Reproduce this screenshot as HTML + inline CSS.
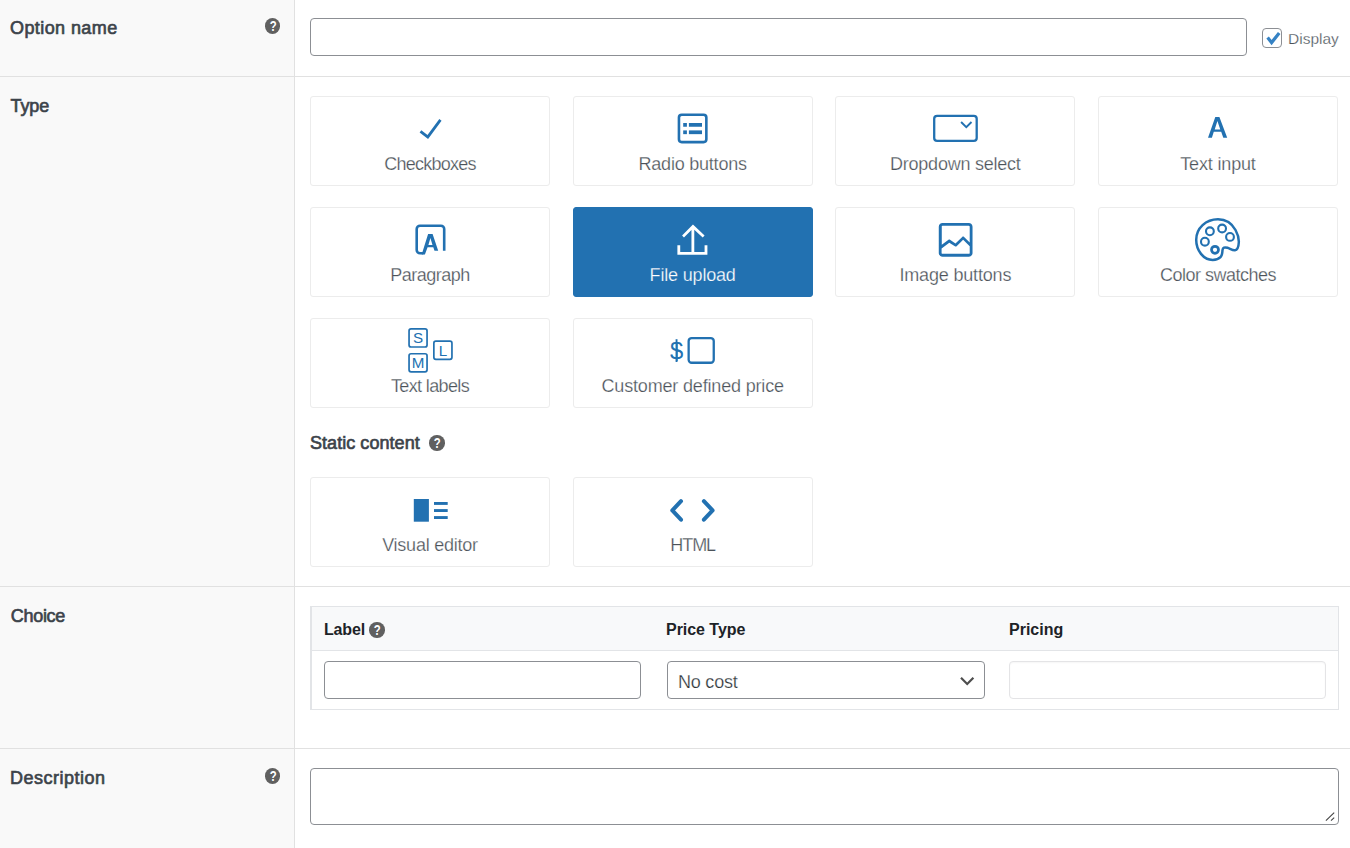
<!DOCTYPE html>
<html>
<head>
<meta charset="utf-8">
<title>Add-on option</title>
<style>
*{box-sizing:border-box;margin:0;padding:0}
html,body{width:1350px;height:848px;overflow:hidden;background:#fff}
body{font-family:"Liberation Sans",sans-serif;color:#50575e;position:relative}
.abs{position:absolute}
.leftcol{left:0;top:0;width:295px;height:848px;background:#f9f9f9;border-right:1px solid #e1e1e1}
.hline{left:0;width:1350px;height:1px;background:#e1e1e1}
.lbl{font-weight:normal;-webkit-text-stroke:0.65px #3c434a;font-size:18px;line-height:20px;color:#3c434a;white-space:nowrap;left:10px}
.tip{width:15.5px;height:15.5px;border-radius:50%;background:#606060;color:#fff;font-weight:bold;font-size:13.5px;line-height:15.5px;text-align:center}
.tip i{font-style:normal;display:block;transform:translate(0.4px,0.45px) scale(0.84,1.1)}
.inp{background:#fff;border:1px solid #8c8f94;border-radius:4px}
.tile{width:240px;height:90px;background:#fff;border:1px solid #ececec;border-radius:3px}
.tile .t{position:absolute;left:0;width:100%;top:57px;text-align:center;font-size:18px;line-height:20px;color:#4b5259;white-space:nowrap;-webkit-text-stroke:0.25px #fff}
.tile.sel{background:#2271b1;border-color:#2271b1}
.tile.sel .t{color:#fff;-webkit-text-stroke:0.25px #2271b1}
.th{font-weight:bold;font-size:16px;line-height:20px;color:#1d2327;white-space:nowrap}
#icons{left:0;top:0;width:1350px;height:848px;pointer-events:none}
</style>
</head>
<body>
<div class="abs leftcol"></div>
<div class="abs hline" style="top:76px"></div>
<div class="abs hline" style="top:586px"></div>
<div class="abs hline" style="top:748px"></div>

<div class="abs lbl" style="top:18px;letter-spacing:0.41px">Option name</div>
<div class="abs lbl" style="top:96px;left:10.5px;letter-spacing:-0.1px">Type</div>
<div class="abs lbl" style="top:606px;left:10.8px;letter-spacing:-0.3px">Choice</div>
<div class="abs lbl" style="top:768px;letter-spacing:0.49px">Description</div>

<div class="abs tip" style="left:264.7px;top:18.1px"><i>?</i></div>
<div class="abs tip" style="left:264.7px;top:768.1px"><i>?</i></div>

<!-- option name input -->
<div class="abs inp" style="left:310px;top:18px;width:937px;height:38px"></div>
<div class="abs" id="cb" style="left:1262px;top:28px;width:20px;height:20px;border:1px solid #8c8f94;border-radius:4px;background:#fff"></div>
<div class="abs" id="disp" style="left:1288px;top:29px;font-size:15.5px;line-height:20px;color:#4b5259;letter-spacing:0px;-webkit-text-stroke:0.25px #fff">Display</div>

<!-- tiles row 1 -->
<div class="abs tile" style="left:310px;top:96px"><div class="t" style="letter-spacing:-0.77px">Checkboxes</div></div>
<div class="abs tile" style="left:572.67px;top:96px"><div class="t" style="letter-spacing:-0.22px">Radio buttons</div></div>
<div class="abs tile" style="left:835.33px;top:96px"><div class="t" style="letter-spacing:-0.23px">Dropdown select</div></div>
<div class="abs tile" style="left:1098px;top:96px"><div class="t" style="letter-spacing:-0.16px">Text input</div></div>
<!-- row 2 -->
<div class="abs tile" style="left:310px;top:207px"><div class="t" style="letter-spacing:-0.53px">Paragraph</div></div>
<div class="abs tile sel" style="left:572.67px;top:207px"><div class="t" style="letter-spacing:-0.18px">File upload</div></div>
<div class="abs tile" style="left:835.33px;top:207px"><div class="t" style="letter-spacing:-0.17px">Image buttons</div></div>
<div class="abs tile" style="left:1098px;top:207px"><div class="t" style="letter-spacing:-0.49px">Color swatches</div></div>
<!-- row 3 -->
<div class="abs tile" style="left:310px;top:318px"><div class="t" style="letter-spacing:-0.63px">Text labels</div></div>
<div class="abs tile" style="left:572.67px;top:318px"><div class="t" style="letter-spacing:-0.17px">Customer defined price</div></div>

<div class="abs lbl" id="static" style="left:310px;top:433px;letter-spacing:0.05px">Static content</div>
<div class="abs tip" style="left:429px;top:435px"><i>?</i></div>

<div class="abs tile" style="left:310px;top:477px"><div class="t" style="letter-spacing:-0.23px">Visual editor</div></div>
<div class="abs tile" style="left:572.67px;top:477px"><div class="t" style="letter-spacing:-1.07px">HTML</div></div>

<!-- choice table -->
<div class="abs" id="tbl" style="left:310px;top:606px;width:1029px;height:104px;border:1px solid #e2e4e7;border-left-width:2px;background:#fff"></div>
<div class="abs" id="thead" style="left:312px;top:607px;width:1026px;height:44px;background:#f8f9fa;border-bottom:1px solid #e2e4e7"></div>
<div class="abs th" style="left:324px;top:620px;letter-spacing:-0.15px">Label</div>
<div class="abs tip" style="left:369px;top:622px"><i>?</i></div>
<div class="abs th" style="left:666px;top:620px;letter-spacing:-0.04px">Price Type</div>
<div class="abs th" style="left:1009px;top:620px">Pricing</div>
<div class="abs inp" style="left:324px;top:661px;width:317px;height:38px"></div>
<div class="abs inp" id="sel" style="left:667px;top:661px;width:318px;height:38px"></div>
<div class="abs" id="nocost" style="left:678px;top:672px;font-size:18px;line-height:20px;color:#2c3338;letter-spacing:-0.22px;-webkit-text-stroke:0.25px #fff">No cost</div>
<div class="abs inp" style="left:1009px;top:661px;width:317px;height:38px;border-color:#e4e4e6;box-shadow:inset 0 1px 2px rgba(0,0,0,.04)"></div>

<!-- description -->
<div class="abs inp" style="left:310px;top:768px;width:1029px;height:57px"></div>

<svg id="icons" class="abs" width="1350" height="848" viewBox="0 0 1350 848">
<!--ICONS_START-->
<g fill="#2271b1" stroke="none">
<!-- checkbox tick in Display -->
<path d="M1267.6 37.6 L1271.6 42.6 L1279.2 32.9" fill="none" stroke="#3582c4" stroke-width="3.2"/>
<!-- 1 check -->
<path transform="translate(408 105.8) scale(1.875)" d="M16.7 7.1l-6.3 8.5-3.3-2.5-.9 1.2 4.5 3.4L17.9 8z"/>
<!-- 2 radio/list -->
<rect x="678.95" y="114.8" width="27.4" height="27.3" rx="2.8" fill="none" stroke="#2271b1" stroke-width="2.6"/>
<rect x="683.2" y="123" width="3.7" height="3.75"/><rect x="688.9" y="123" width="13.1" height="3.75"/>
<rect x="683.2" y="130.4" width="3.7" height="3.75"/><rect x="688.9" y="130.4" width="13.1" height="3.75"/>
<!-- 3 dropdown -->
<rect x="934.2" y="115.95" width="42.5" height="24.9" rx="2.9" fill="none" stroke="#2271b1" stroke-width="2.3"/>
<path d="M961.1 122 L966.3 127.2 L971.5 122" fill="none" stroke="#2271b1" stroke-width="1.9"/>
<!-- 4 A -->
<path fill-rule="evenodd" d="M1208 137.8 L1215.3 117.1 H1219.4 L1227.2 137.8 H1223.3 L1221.2 131.8 H1213.8 L1211.9 137.8 Z M1214.7 129.4 H1220.3 L1217.4 120.9 Z"/>
<!-- 5 paragraph -->
<path d="M444.2 250.7 V229 a3.3 3.3 0 0 0 -3.3 -3.3 H420 a3.3 3.3 0 0 0 -3.3 3.3 V249.9 a3.3 3.3 0 0 0 3.3 3.3 H423.3" fill="none" stroke="#2271b1" stroke-width="2.6"/>
<path fill-rule="evenodd" d="M421.7 254.5 L428.1 234 H432.6 L438.2 250.7 H434.5 L433.3 247.3 H427.6 L424.9 254.5 Z M428.4 244.9 H432.5 L430.4 238 Z"/>
<!-- 6 upload (white) -->
<path fill="#fff" transform="translate(669.9 217.2) scale(1.875)" d="M18.5 15v3.5H13V6.7l4.5 4.1 1-1.1-6.2-5.8-5.8 5.8 1 1.1 4-4v11.7h-6V15H4v5h16v-5z"/>
<!-- 7 image -->
<path transform="translate(933.15 217.3) scale(1.875)" d="M19 3H5c-1.1 0-2 .9-2 2v14c0 1.1.9 2 2 2h14c1.1 0 2-.9 2-2V5c0-1.1-.9-2-2-2zM5 4.500h14c.3 0 .5.2.5.500v8.400l-3-2.900c-.3-.3-.8-.3-1 0L11.900 14 9 12c-.3-.2-.6-.2-.8 0l-3.600 2.600V5c-.1-.3.100-.5.400-.5zm14 15H5c-.3 0-.5-.2-.5-.5v-2.400l4.100-3 3 1.900c.3.200.7.200.9-.100L16 12l3.500 3.400V19c0 .3-.2.500-.500.500z"/>
<!-- 8 palette -->
<path d="M1218 219.2 C1226 219.2 1232 223.500 1235.500 230 C1238 234.500 1239 239 1238.800 242.500 C1238.600 246.500 1237.800 250 1235 250.200 C1232.500 250.400 1230 248.600 1227.500 247.800 C1224.500 246.800 1222.800 247.600 1222.500 250.200 C1222.200 253 1222.500 255 1220.500 257.200 C1218.800 259 1216 259.900 1212.700 259.900 C1203.500 259.900 1196.200 250.500 1196.200 239.800 C1196.200 228 1206 219.200 1218 219.200 Z" fill="none" stroke="#2271b1" stroke-width="2.5"/>
<g fill="none" stroke="#2271b1" stroke-width="2.1">
<circle cx="1209.900" cy="231.300" r="3.900"/><circle cx="1222.100" cy="228.500" r="3.900"/><circle cx="1230" cy="236.900" r="3.900"/><circle cx="1204.900" cy="241.700" r="3.900"/>
</g>
<circle cx="1215" cy="249.800" r="3.500" fill="none" stroke="#2271b1" stroke-width="2.700"/>
<!-- 9 S M L -->
<g fill="none" stroke="#2271b1" stroke-width="1.700">
<rect x="409.050" y="328.900" width="18" height="18.100" rx="2"/>
<rect x="409.050" y="353.750" width="18" height="18.100" rx="2"/>
<rect x="433.850" y="341.150" width="18.100" height="18.200" rx="2"/>
</g>
<g font-family="Liberation Sans, sans-serif" font-size="15.200" text-anchor="middle">
<text x="418.150" y="343.300">S</text><text x="418.100" y="367.700">M</text><text x="443" y="356">L</text>
</g>
<!-- 10 $ box -->
<text x="676.500" y="358.8" font-family="Liberation Sans, sans-serif" font-size="23.8" text-anchor="middle">$</text><rect x="675.6" y="339.2" width="1.9" height="22.8"/>
<rect x="688.650" y="338.050" width="25.100" height="24.700" rx="3" fill="none" stroke="#2271b1" stroke-width="2.300"/>
<!-- 11 visual editor -->
<rect x="413.800" y="499" width="15.100" height="22.700"/>
<rect x="434" y="502" width="13.700" height="2.900"/><rect x="434" y="509.100" width="13.700" height="2.900"/><rect x="434" y="516.100" width="13.700" height="2.900"/>
<!-- 12 html -->
<g fill="none" stroke="#2271b1" stroke-width="4" stroke-linecap="round" stroke-linejoin="round">
<path d="M681 501.200 L672.300 510.450 L681 519.700"/><path d="M703.900 501.200 L712.600 510.450 L703.900 519.700"/>
</g>
</g>
<!-- select chevron -->
<path d="M961 677.8 L967.2 684 L973.4 677.8" fill="none" stroke="#4d4d4d" stroke-width="2.2"/>
<!-- resize handle -->
<path d="M1325.900 820.700 L1334.200 812.700 M1331 820.700 L1334.200 817.700" fill="none" stroke="#444" stroke-width="1.100"/>
<!--ICONS_END-->
</svg>
</body>
</html>
